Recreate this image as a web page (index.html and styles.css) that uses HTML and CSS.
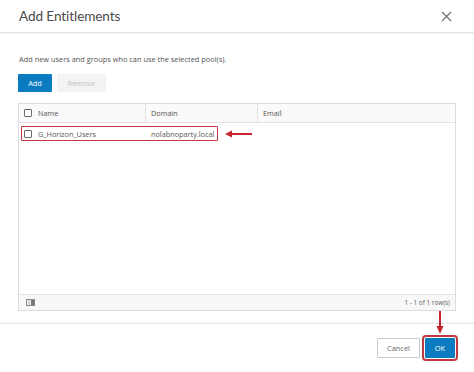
FILE: index.html
```html
<!DOCTYPE html>
<html>
<head>
<meta charset="utf-8">
<link rel="stylesheet" href="styles.css">
</head>
<body>
<div class="dialog">
  <div class="header">
    <span class="title">Add Entitlements</span>
    <svg class="close" width="11" height="11" viewBox="0 0 11 11"><path d="M1 1L10 10M10 1L1 10" stroke="#757575" stroke-width="1.3" fill="none"/></svg>
  </div>
  <div class="content">
    <p class="intro">Add new users and groups who can use the selected pool(s).</p>
    <div class="actions">
      <button class="btn primary">Add</button>
      <button class="btn disabled">Remove</button>
    </div>
    <div class="grid">
      <div class="row head">
        <div class="cell c1"><span class="cb"></span>Name</div>
        <div class="cell c2">Domain</div>
        <div class="cell c3">Email</div>
      </div>
      <div class="row item">
        <div class="cell c1"><span class="cb"></span>G_Horizon_Users</div>
        <div class="cell c2">nolabnoparty.local</div>
        <div class="cell c3"></div>
        <div class="mark-row"></div>
        <svg class="arrow-left" width="28" height="8" viewBox="0 0 28 8"><path d="M27 4H6" stroke="#c8262c" stroke-width="2"/><path d="M0 4L7 0.5V7.5Z" fill="#c8262c"/></svg>
      </div>
      <div class="spacer"></div>
      <div class="gfoot">
        <svg class="colicon" width="9" height="7" viewBox="0 0 9 7"><rect x="0.5" y="0.5" width="8" height="6" fill="none" stroke="#888"/><rect x="5" y="1" width="3" height="5" fill="#777"/><line x1="3" y1="1" x2="3" y2="6" stroke="#aaa"/></svg>
        <span class="count">1 - 1 of 1 row(s)</span>
      </div>
    </div>
  </div>
  <div class="footer">
    <button class="btn cancel">Cancel</button>
    <div class="okwrap">
      <svg class="arrow-down" width="8" height="23" viewBox="0 0 8 23"><path d="M4 0V16" stroke="#c8262c" stroke-width="2"/><path d="M0.5 15L4 23L7.5 15Z" fill="#c8262c"/></svg>
      <button class="btn primary ok">OK</button>
    </div>
  </div>
</div>
</body>
</html>
```
FILE: styles.css
```css
* { box-sizing: border-box; }
html, body { margin: 0; padding: 0; background: #fff; }
body { width: 474px; height: 372px; overflow: hidden; font-family: "Open Sans", sans-serif; color: #565656; }
.dialog { display: flex; flex-direction: column; height: 372px; }
.header {
  height: 33px; flex: none; display: flex; align-items: center; justify-content: space-between;
  padding: 0 22px 0 19px; border-bottom: 1px solid #e4e4e4; box-shadow: 0 1px 1px rgba(0,0,0,0.04);
}
.title { font-family: Lato, sans-serif; font-size: 13.6px; color: #4a4a4a; letter-spacing: -0.1px; }
.close { display: block; }
.content { padding: 0 18px 0 18px; flex: none; }
.intro { margin: 21px 0 0 1px; font-size: 7.4px; line-height: 10px; color: #555; }
.actions { display: flex; gap: 5px; margin-top: 10px; }
.btn {
  font-family: "Open Sans", sans-serif; font-size: 7.4px; height: 18px; border: 0; padding: 0; border-radius: 1px;
  display: flex; align-items: center; justify-content: center;
}
.btn.primary { background: #0a7cbf; color: #fff; width: 34px; }
.btn.disabled { background: #f3f3f3; color: #c2c2c2; width: 49px; }
.grid {
  margin-top: 11px; width: 438px; height: 208px; border: 1px solid #dcdcdc;
  display: flex; flex-direction: column;
}
.row { display: flex; position: relative; }
.cell { display: flex; align-items: center; font-size: 7.3px; color: #555; }
.c1 { width: 127px; padding-left: 5px; }
.c2 { width: 112px; padding-left: 5px; }
.c3 { flex: 1; padding-left: 5px; }
.head { height: 19px; background: #fafafa; border-bottom: 1px solid #e2e2e2; }
.head .c1, .head .c2 { border-right: 1px solid #e2e2e2; }
.item { height: 18px; margin-top: 2px; }
.cb { width: 8px; height: 8px; border: 1px solid #6d6d6d; border-radius: 1px; margin-right: 6px; background: #fff; flex: none; }
.mark-row {
  position: absolute; left: 2px; top: 1px; width: 197px; height: 15px;
  border: 1.5px solid #c23a3f; border-radius: 1px;
}
.arrow-left { position: absolute; left: 206px; top: 5px; }
.spacer { flex: 1; }
.gfoot {
  height: 16px; background: #f8f8f8; border-top: 1px solid #e4e4e4;
  display: flex; align-items: center; justify-content: space-between; padding: 0 5px 0 7px;
}
.colicon { display: block; }
.count { font-size: 6.4px; color: #666; }
.footer {
  margin-top: 12px; border-top: 1px solid #e6e6e6; box-shadow: 0 -1px 1px rgba(0,0,0,0.03);
  display: flex; justify-content: flex-end; align-items: flex-start; gap: 5px; padding: 14px 19px 0 0;
}
.btn.cancel { width: 43px; height: 20px; background: #fff; border: 1px solid #c9c9c9; color: #6a6a6a; }
.okwrap { position: relative; }
.btn.ok { width: 30px; height: 20px; outline: 2px solid #c23a3f; outline-offset: 1px; }
.arrow-down { position: absolute; left: 11px; top: -27px; }
```
